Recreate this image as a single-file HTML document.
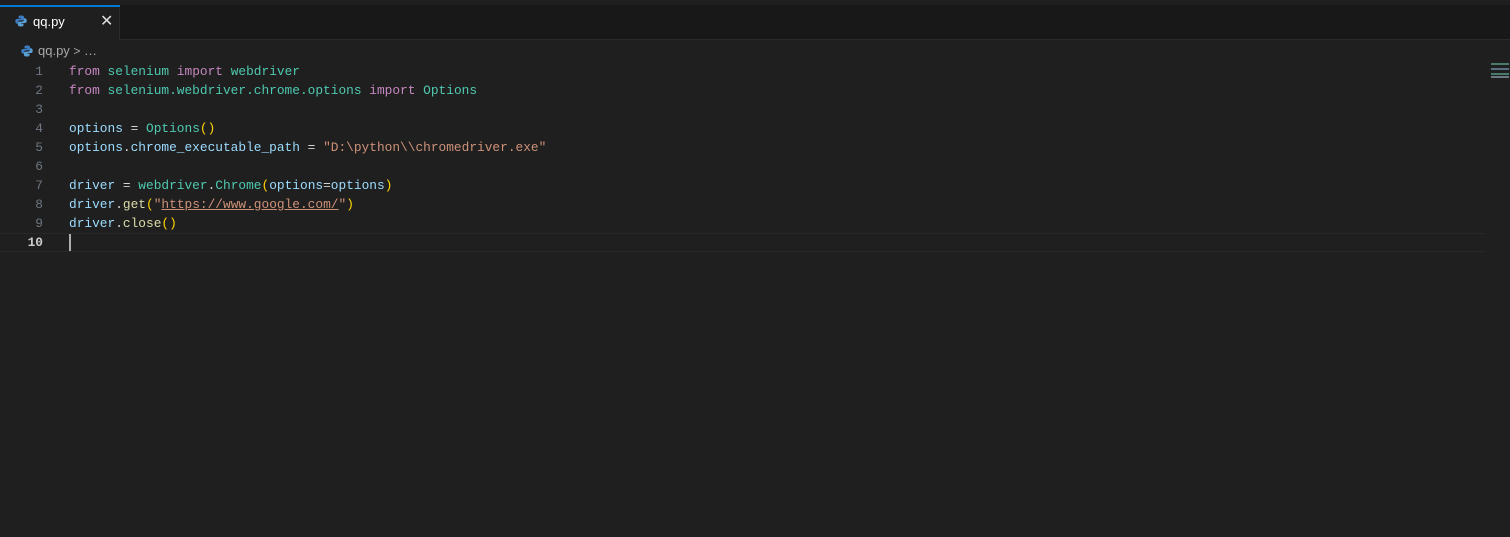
<!DOCTYPE html>
<html><head><meta charset="utf-8"><style>
body{margin:0;width:1510px;height:537px;background:#1f1f1f;overflow:hidden;position:relative;font-family:"Liberation Sans",sans-serif}
.top{position:absolute;left:0;top:0;width:1510px;height:5px;background:#1f1f1f}
.tabbar{position:absolute;left:0;top:5px;width:1510px;height:34px;background:#181818;border-bottom:1px solid #2b2b2b}
.tab{position:absolute;left:0;top:0;width:120px;height:35px;background:#1f1f1f;border-right:1px solid #2b2b2b;box-sizing:border-box}
.blue{position:absolute;left:0;top:5px;width:120px;height:2px;background:#0078d4;z-index:5}
.tab .n{position:absolute;left:33px;top:9px;color:#fff;font-size:13px}
.tab .x{position:absolute;left:100px;top:6px;color:#ddd;font-size:16px}
.bc{position:absolute;left:38px;top:43px;color:#a9a9a9;font-size:13px}
.code{position:absolute;left:0;top:62px;font-family:"Liberation Mono",monospace;font-size:12.83px;line-height:19px;white-space:pre}
.ln{position:absolute;left:0;width:43px;text-align:right;color:#6e7681}
.l{position:absolute;left:69px;color:#9cdcfe}
.k{color:#c586c0}.t{color:#4ec9b0}.s{color:#ce9178}.p{color:#ffd700}.f{color:#dcdcaa}.o{color:#d4d4d4}
.cur{position:absolute;left:0;top:233px;width:1484px;height:17px;border-top:1px solid #282828;border-bottom:1px solid #282828}
</style></head><body>
<div class="top"></div>
<div class="tabbar"><div class="tab">
<svg style="position:absolute;left:15px;top:10px" width="12" height="12" viewBox="0 0 12 12"><path d="M6 0.5c-2.5 0-2.5 1-2.5 1.5V3.5h2.6v.5H2C.8 4 .3 5 .3 6.3s.6 2.3 1.6 2.3h1.2V7.2c0-1 .8-1.8 1.8-1.8h2.7c.8 0 1.5-.7 1.5-1.5V2c0-.9-.9-1.5-3.1-1.5z" fill="#3b7bbf"/><path d="M6 11.5c2.5 0 2.5-1 2.5-1.5V8.5H5.9V8H10c1.2 0 1.700-1 1.7-2.3s-.6-2.3-1.6-2.3H8.9v1.4c0 1-.8 1.8-1.8 1.8H4.4c-.8 0-1.5.7-1.5 1.5V10c0 .9.9 1.5 3.1 1.5z" fill="#5a9fd4"/></svg>
<span class="n">qq.py</span><span class="x">✕</span></div></div>
<div class="blue"></div>
<svg style="position:absolute;left:21px;top:45px" width="12" height="12" viewBox="0 0 12 12"><path d="M6 0.5c-2.5 0-2.5 1-2.5 1.5V3.5h2.6v.5H2C.8 4 .3 5 .3 6.3s.6 2.3 1.6 2.3h1.2V7.2c0-1 .8-1.8 1.8-1.8h2.7c.8 0 1.5-.7 1.5-1.5V2c0-.9-.9-1.5-3.1-1.5z" fill="#3b7bbf"/><path d="M6 11.5c2.5 0 2.5-1 2.5-1.5V8.5H5.9V8H10c1.2 0 1.7-1 1.7-2.3s-.6-2.3-1.6-2.3H8.9v1.4c0 1-.8 1.8-1.8 1.8H4.4c-.8 0-1.5.7-1.5 1.5V10c0 .9.9 1.5 3.1 1.5z" fill="#5a9fd4"/></svg>
<div class="bc">qq.py <span style="font-size:12px">&gt;</span> …</div>
<div class="cur"></div>
<div class="code">
<div class="ln" style="top:0">1</div><div class="ln" style="top:19px">2</div><div class="ln" style="top:38px">3</div><div class="ln" style="top:57px">4</div><div class="ln" style="top:76px">5</div><div class="ln" style="top:95px">6</div><div class="ln" style="top:114px">7</div><div class="ln" style="top:133px">8</div><div class="ln" style="top:152px">9</div><div class="ln" style="top:171px;color:#ccc;font-weight:bold">10</div>
<div class="l" style="top:0"><span class="k">from</span> <span class="t">selenium</span> <span class="k">import</span> <span class="t">webdriver</span></div>
<div class="l" style="top:19px"><span class="k">from</span> <span class="t">selenium.webdriver.chrome.options</span> <span class="k">import</span> <span class="t">Options</span></div>
<div class="l" style="top:57px">options <span class="o">=</span> <span class="t">Options</span><span class="p">()</span></div>
<div class="l" style="top:76px">options<span class="o">.</span>chrome_executable_path <span class="o">=</span> <span class="s">"D:\python\\chromedriver.exe"</span></div>
<div class="l" style="top:114px">driver <span class="o">=</span> <span class="t">webdriver</span><span class="o">.</span><span class="t">Chrome</span><span class="p">(</span>options<span class="o">=</span>options<span class="p">)</span></div>
<div class="l" style="top:133px">driver<span class="o">.</span><span class="f">get</span><span class="p">(</span><span class="s">"<u>https://www.google.com/</u>"</span><span class="p">)</span></div>
<div class="l" style="top:152px">driver<span class="o">.</span><span class="f">close</span><span class="p">()</span></div>
<div style="position:absolute;left:69px;top:172px;width:2px;height:17px;background:#aeafad"></div>
</div>
<div style="position:absolute;left:1491px;top:63px;width:18px;height:2px;background:#4a7a6a"></div>
<div style="position:absolute;left:1491px;top:68px;width:18px;height:2px;background:#5a7080"></div>
<div style="position:absolute;left:1491px;top:73px;width:18px;height:2px;background:#4a7a6a"></div>
<div style="position:absolute;left:1491px;top:76px;width:18px;height:2px;background:#6a7a80"></div>
</body></html>
